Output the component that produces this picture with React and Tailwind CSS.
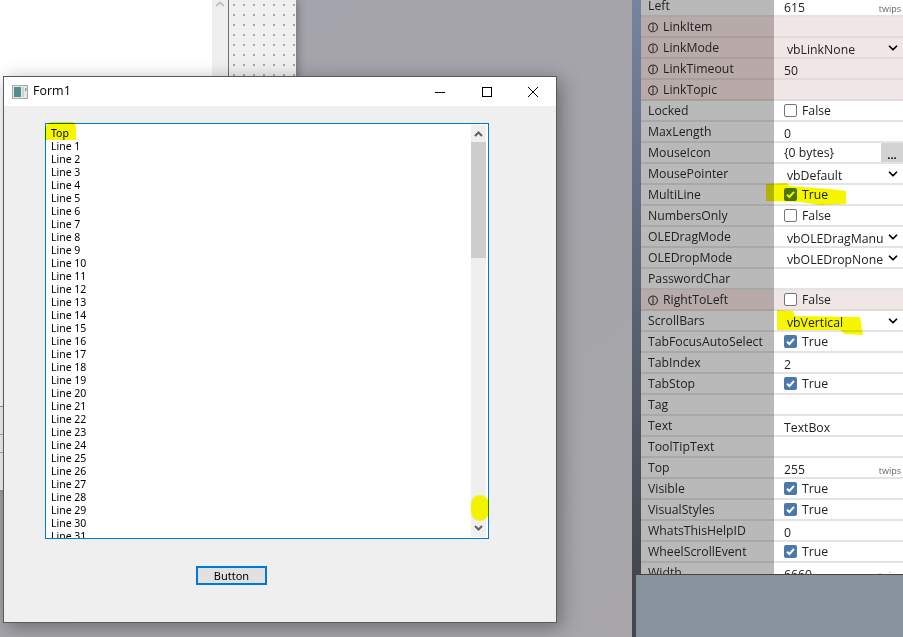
import React from "react";
import { ChevronDown } from "lucide-react";

const seg = { fontFamily: '"Open Sans","Noto Sans",sans-serif' };

function Check({ on }) {
  if (!on) return <span className="w-[13px] h-[13px] rounded-[2px] border border-[#767676] bg-white shrink-0" />;
  return (
    <span className="w-[13px] h-[13px] rounded-[2px] bg-[#4c78ab] shrink-0 flex items-center justify-center">
      <svg width="11" height="11" viewBox="0 0 11 11" fill="none" stroke="#fff" strokeWidth="2"><path d="M2 5.8 L4.4 8 L9 2.8" /></svg>
    </span>
  );
}

const rows = [
  ["Left", "num", "615", "twips"],
  ["LinkItem", "info", ""],
  ["LinkMode", "infoselect", "vbLinkNone"],
  ["LinkTimeout", "info", "50"],
  ["LinkTopic", "info", ""],
  ["Locked", "check", false],
  ["MaxLength", "num", "0"],
  ["MouseIcon", "dots", "{0 bytes}"],
  ["MousePointer", "select", "vbDefault"],
  ["MultiLine", "check", true],
  ["NumbersOnly", "check", false],
  ["OLEDragMode", "select", "vbOLEDragManual"],
  ["OLEDropMode", "select", "vbOLEDropNone"],
  ["PasswordChar", "num", ""],
  ["RightToLeft", "infocheck", false],
  ["ScrollBars", "select", "vbVertical"],
  ["TabFocusAutoSelect", "check", true],
  ["TabIndex", "num", "2"],
  ["TabStop", "check", true],
  ["Tag", "num", ""],
  ["Text", "num", "TextBox"],
  ["ToolTipText", "num", ""],
  ["Top", "num", "255", "twips"],
  ["Visible", "check", true],
  ["VisualStyles", "check", true],
  ["WhatsThisHelpID", "num", "0"],
  ["WheelScrollEvent", "check", true],
  ["Width", "num", "6660", "twips"],
];

function Row({ r }) {
  const [name, kind, val, extra] = r;
  const info = kind.startsWith("info");
  const isCheck = kind === "check" || kind === "infocheck";
  const isSelect = kind === "select" || kind === "infoselect";
  return (
    <div className="flex h-[21px] shrink-0 text-[12.25px] leading-[20px] text-[#222]">
      <div className={`w-[133px] shrink-0 pl-[7px] border-b-2 whitespace-nowrap ${info ? "bg-[#b9aaaa] border-[#a89e9e]" : "bg-[#b9b9b9] border-[#a8a8a8]"}`}>
        {info && <span className="inline-block w-[15px] text-[10px] font-semibold">ⓘ</span>}
        {name}
      </div>
      <div className={`relative flex-1 min-w-0 border-b-2 ${info ? "bg-[#f0e6e6] border-[#e3dada]" : "bg-white border-[#e4e4e4]"}`}>
        {isCheck && (
          <div className="flex items-center h-[19px] pl-[10px] gap-[5px]">
            <Check on={val} />
            <span>{val ? "True" : "False"}</span>
          </div>
        )}
        {isSelect && (
          <div className="flex items-center h-[19px] pl-[13px] pr-[3px] pt-[4px]">
            <span className="w-[96px] overflow-hidden whitespace-nowrap">{val}</span>
            <ChevronDown className="ml-auto -mt-[4px] text-black" size={14} strokeWidth={3} />
          </div>
        )}
        {(kind === "num" || kind === "info") && val !== "" && (
          <div className="pl-[10px] pt-[2px] flex">
            <span>{val}</span>
            {extra && <span className="ml-auto pr-[2px] text-[9px] text-[#666] pt-[1px]">{extra}</span>}
          </div>
        )}
        {kind === "dots" && (
          <div className="flex h-[19px]">
            <span className="pl-[10px] flex-1">{val}</span>
            <span className="w-[22px] bg-[#d3d3d3] text-center font-bold text-[11px] leading-[23px] text-black">...</span>
          </div>
        )}
      </div>
    </div>
  );
}

function Form() {
  const lines = Array.from({ length: 31 }, (_, i) => `Line ${i + 1}`);
  return (
    <div className="absolute left-[3px] top-[76px] w-[554px] h-[547px] bg-[#efefef] border border-[#5a5a5a] shadow-[4px_4px_18px_rgba(0,0,0,0.35)] flex flex-col">
      <div className="h-[29px] bg-white flex items-center pl-[8px] shrink-0">
        <svg width="16" height="14" viewBox="0 0 16 14" className="mr-[5px]">
          <rect x="0.5" y="0.5" width="15" height="13" fill="#e8e8e8" stroke="#a8a8a8" />
          <rect x="2" y="2" width="7" height="10" fill="#4f8f8f" />
          <rect x="10" y="2" width="2" height="10" fill="#c5d8c8" />
          <rect x="13" y="3" width="1.5" height="3" fill="#7ea7b5" />
        </svg>
        <span className="text-[12.5px] text-black" style={seg}>Form1</span>
        <div className="ml-auto flex items-center">
          <svg width="46" height="28" viewBox="0 0 46 28" stroke="#000" fill="none"><path d="M0 14.5H10" transform="translate(17 0)" /></svg>
          <svg width="46" height="28" viewBox="0 0 46 28" stroke="#000" fill="none"><rect x="18.5" y="9.5" width="9" height="9" /></svg>
          <svg width="46" height="28" viewBox="0 0 46 28" stroke="#000" fill="none"><path d="M18 9L28 19M28 9L18 19" /></svg>
        </div>
      </div>
      <div className="flex-1 flex flex-col items-start relative">
        <div className="mt-[17px] ml-[41px] w-[444px] h-[416px] border border-[#0078d7] bg-white flex relative">
          <div className="flex-1 overflow-hidden pl-[5px] pt-[3px] text-[10.5px] leading-[13px] text-black" style={{ fontFamily: '"Noto Sans",sans-serif' }}>
            <div>Top</div>
            {lines.map((l) => <div key={l}>{l}</div>)}
          </div>
          <div className="w-[15px] mr-[2px] my-[1px] bg-[#efefef] flex flex-col items-center shrink-0">
            <svg width="15" height="17" viewBox="0 0 15 17" fill="none" stroke="#606060" strokeWidth="2" className="shrink-0"><path d="M4 11L7.5 7.5L11 11" /></svg>
            <div className="w-full h-[116px] bg-[#cdcdcd] shrink-0" />
            <svg width="15" height="17" viewBox="0 0 15 17" fill="none" stroke="#606060" strokeWidth="2" className="mt-auto shrink-0"><path d="M4 6L7.5 9.5L11 6" /></svg>
          </div>
        </div>
        <button className="mt-[27px] ml-[192px] w-[71px] h-[19px] border-2 border-[#0078d7] bg-[#e1e1e1] text-[11px] leading-[15px] text-black" style={{ fontFamily: '"Noto Sans",sans-serif' }}>Button</button>
      </div>
      <div className="absolute left-[41px] top-[45px] w-[31px] h-[18px] bg-[#f6f600] rounded-tl-[8px] rounded-tr-[5px] mix-blend-multiply" />
      <div className="absolute left-[467px] top-[418px] w-[18px] h-[26px] bg-[#f3f300] rounded-[9px]" />
      <div className="absolute left-[484px] top-[421px] w-px h-[18px] bg-[#1f8a00]" />
    </div>
  );
}

export default function App() {
  return (
    <div className="relative w-[903px] h-[637px] overflow-hidden bg-gradient-to-br from-[#a3a3ac] to-[#a8a6a8] flex" style={seg}>
      <div className="w-[296px] h-[490px] flex shrink-0 bg-white shadow-[2px_0_8px_rgba(0,0,0,0.3)]">
        <div className="w-[212px] flex flex-col">
          <div className="flex-1 bg-white" />
          <div className="h-[84px] bg-[#f4f4f4] border-t border-[#999]">
            <div className="h-[28px] border-b border-[#aaa]" />
            <div className="h-[18px] border-b border-[#aaa]" />
          </div>
        </div>
        <div className="w-[17px] bg-[#efefef] border-r border-[#6e6e6e] flex justify-center">
          <svg width="16" height="10" viewBox="0 0 16 10" fill="none" stroke="#c0c0c0" strokeWidth="2"><path d="M4 6L8 2.5L12 6" /></svg>
        </div>
        <div className="flex-1 bg-[#f0f0f0] bg-[radial-gradient(circle,#555_0.6px,transparent_0.8px)] bg-[length:10px_10px]" />
      </div>
      <div className="w-[336px] shrink-0" />
      <div className="flex-1 min-w-0 flex flex-col">
        <div className="h-[574px] flex shrink-0">
          <div className="w-[9px] shrink-0 bg-gradient-to-b from-[#76849f] to-[#44474e]" />
          <div className="flex-1 min-w-0 overflow-hidden">
            <div className="-mt-[4px] flex flex-col">
              {rows.map((r) => <Row key={r[0]} r={r} />)}
            </div>
          </div>
        </div>
        <div className="flex-1 flex">
          <div className="w-[4px] shrink-0 bg-[#44474e]" />
          <div className="flex-1 bg-[#87929c] border-t border-[#444]" />
        </div>
      </div>
      <Form />
      <svg width="903" height="637" viewBox="0 0 903 637" className="absolute left-0 top-0 mix-blend-multiply pointer-events-none">
        <path d="M766 184 L786 183 L790 186 L830 189 L846 191 L846 204 L820 205 L800 202 L766 201 Z" fill="#f6f600" />
        <path d="M777 310 L793 311 L795 316 L860 317 L863 335 L845 334 L840 330 L777 330 Z" fill="#f6f600" />
      </svg>
    </div>
  );
}
